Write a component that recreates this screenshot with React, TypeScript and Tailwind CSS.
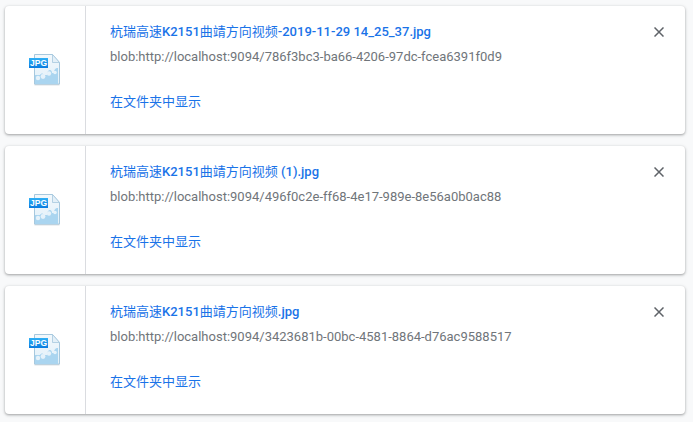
import React from 'react';

const downloads = [
  { name: '-2019-11-29 14_25_37.jpg', url: 'blob:http://localhost:9094/786f3bc3-ba66-4206-97dc-fcea6391f0d9' },
  { name: ' (1).jpg', url: 'blob:http://localhost:9094/496f0c2e-ff68-4e17-989e-8e56a0b0ac88' },
  { name: '.jpg', url: 'blob:http://localhost:9094/3423681b-00bc-4581-8864-d76ac9588517' },
];

const JpgIcon = () => (
  <svg width="32" height="32" viewBox="0 0 32 32" className="block">
    <defs>
      <linearGradient id="paper" x1="0" y1="0" x2="0" y2="1">
        <stop offset="0" stopColor="#f2f8fc" />
        <stop offset="1" stopColor="#e2f0f9" />
      </linearGradient>
      <linearGradient id="label" x1="0" y1="0" x2="0" y2="1">
        <stop offset="0" stopColor="#2fb0f5" />
        <stop offset="1" stopColor="#0a7ce0" />
      </linearGradient>
    </defs>
    <path d="M5.500 30.800h25" stroke="#c4ccd2" strokeWidth="1" />
    <path d="M5.500 0.500h18l7 8v21.500h-25z" fill="url(#paper)" stroke="#a6c8de" strokeWidth="1" />
    <path d="M23.500 0.500v8h7z" fill="#e4f0f8" stroke="#a6c8de" strokeWidth="0.800" />
    <path d="M6 27v-6h5c1-2 3-2 4 0h3c0-4 2-5 3-5s2 1 2 3h2c0-3 1-5 4-5v16h-23z" fill="#aad5f0" />
    <circle cx="9" cy="24" r="2.200" fill="#e6f2fa" />
    <circle cx="14" cy="22.500" r="2.400" fill="#e6f2fa" />
    <circle cx="20" cy="19.500" r="2.200" fill="#e6f2fa" />
    <circle cx="26" cy="18.500" r="1.800" fill="#e6f2fa" />
    <path d="M0 4h19v10H0z" fill="url(#label)" />
    <text x="9.500" y="12" textAnchor="middle" fontSize="8.500" fontWeight="700" fill="#fff" fontFamily="'Liberation Sans', sans-serif">JPG</text>
  </svg>
);

const DownloadCard = ({ name, url }: { name: string; url: string }) => (
  <div className="flex h-[128px] rounded bg-white shadow-[0_1px_2px_rgba(60,64,67,0.3),0_1px_3px_1px_rgba(60,64,67,0.15)]">
    <div className="flex w-[81px] shrink-0 items-center justify-center border-r border-[#dadce0]">
      <JpgIcon />
    </div>
    <div className="min-w-0 flex-1 pl-[24px] pt-[17px]">
      <div className="h-[18px] whitespace-pre text-[13px] leading-[18px] font-medium text-[#1a73e8]">
        <span className="font-normal">杭瑞高速</span>K2151<span className="font-normal">曲靖方向视频</span>{name}
      </div>
      <div className="mt-[7px] h-[18px] text-[13px] leading-[18px] text-[#70757a]">{url}</div>
      <div className="mt-[27px] h-[18px] text-[13px] leading-[18px] text-[#1a73e8]">在文件夹中显示</div>
    </div>
    <div className="w-[46px] shrink-0 pl-[15px] pt-[21px]">
      <svg width="10" height="10" viewBox="0 0 10 10" className="block">
        <path d="M0.500 0.500l9 9M9.500 0.500l-9 9" stroke="#5f6368" strokeWidth="1.500" fill="none" />
      </svg>
    </div>
  </div>
);

export default function App() {
  return (
    <div className="flex h-[422px] flex-col gap-[12px] overflow-hidden bg-[#f8f9fa] pl-[5px] pr-[8px] pt-[6px] font-['Roboto','Noto_Sans_CJK_SC',sans-serif]">
      {downloads.map((d) => (
        <DownloadCard key={d.url} name={d.name} url={d.url} />
      ))}
    </div>
  );
}
